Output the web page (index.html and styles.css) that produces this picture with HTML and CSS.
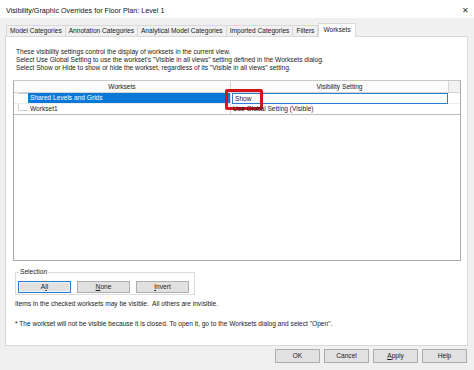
FILE: index.html
```html
<!DOCTYPE html>
<html lang="en">
<head>
    <meta charset="UTF-8">
    <title>Visibility/Graphic Overrides</title>
    <link rel="stylesheet" href="styles.css">
</head>
<body>
    <div class="dialog">
        <div class="title-bar">
            <span class="title">Visibility/Graphic Overrides for Floor Plan: Level 1</span>
            <span class="close">&#x2715;</span>
        </div>

        <div class="dialog-body">
            <div class="tabs">
                <div class="tab">Model Categories</div>
                <div class="tab">Annotation Categories</div>
                <div class="tab">Analytical Model Categories</div>
                <div class="tab">Imported Categories</div>
                <div class="tab">Filters</div>
                <div class="tab active">Worksets</div>
            </div>

            <div class="page">
                <p class="intro">
                    These visibility settings control the display of worksets in the current view.<br>
                    Select Use Global Setting to use the workset's "Visible in all views" setting defined in the Worksets dialog.<br>
                    Select Show or Hide to show or hide the workset, regardless of its "Visible in all views" setting.
                </p>

                <div class="grid">
                    <div class="grid-head">
                        <div class="col-name">Worksets</div>
                        <div class="col-setting">Visibility Setting</div>
                        <div class="col-corner"></div>
                    </div>
                    <div class="grid-row">
                        <div class="indent"><span class="branch first"></span></div>
                        <div class="cell-name selected">Shared Levels and Grids</div>
                        <div class="cell-setting">
                            <div class="edit-box">Show</div>
                            <div class="callout"></div>
                        </div>
                    </div>
                    <div class="grid-row last">
                        <div class="indent"><span class="branch"></span></div>
                        <div class="cell-name">Workset1</div>
                        <div class="cell-setting">
                            <div class="plain-value">Use Global Setting (Visible)</div>
                        </div>
                    </div>
                </div>

                <fieldset class="selection">
                    <legend>Selection</legend>
                    <button class="btn default">A<u>l</u>l</button>
                    <button class="btn"><u>N</u>one</button>
                    <button class="btn"><u>I</u>nvert</button>
                </fieldset>

                <p class="note">Items in the checked worksets may be visible.&nbsp; All others are invisible.</p>
                <p class="note closed">* The workset will not be visible because it is closed. To open it, go to the Worksets dialog and select "Open".</p>
            </div>

            <div class="footer">
                <button class="btn footer-btn">OK</button>
                <button class="btn footer-btn">Cancel</button>
                <button class="btn footer-btn"><u>A</u>pply</button>
                <button class="btn footer-btn">Help</button>
            </div>
        </div>
    </div>
</body>
</html>
```

FILE: styles.css
```css
* {
    box-sizing: border-box;
}

body {
    margin: 0;
    width: 474px;
    height: 370px;
    overflow: hidden;
    font-family: "Liberation Sans", Arial, sans-serif;
    font-size: 6.6px;
    color: #1a1a1a;
    background: #f0f0f0;
}

.dialog {
    width: 474px;
    height: 370px;
    display: flex;
    flex-direction: column;
}

/* window title */
.title-bar {
    height: 18px;
    background: #ffffff;
    display: flex;
    align-items: center;
    justify-content: space-between;
    padding: 2px 5px 0 6px;
}

.title {
    font-size: 7.2px;
    color: #111;
}

.close {
    font-size: 8px;
    color: #333;
}

.dialog-body {
    flex: 1;
    background: #f0f0f0;
    padding: 5px 6px 0 5px;
    display: flex;
    flex-direction: column;
}

/* tab strip */
.tabs {
    display: flex;
    align-items: flex-end;
    height: 13px;
    padding-left: 1px;
}

.tab {
    height: 11px;
    padding: 0 3px;
    line-height: 10px;
    border: 1px solid #d9d9d9;
    border-bottom: none;
    border-left: none;
    background: #f0f0f0;
    white-space: nowrap;
}

.tab:first-child {
    border-left: 1px solid #d9d9d9;
}

.tab.active {
    height: 14px;
    line-height: 11px;
    margin-bottom: -1px;
    padding: 0 4px;
    background: #ffffff;
    border-left: 1px solid #d9d9d9;
    position: relative;
    z-index: 1;
}

/* tab page */
.page {
    height: 310px;
    background: #ffffff;
    border: 1px solid #d9d9d9;
}

.intro {
    margin: 0;
    padding: 11px 10px 0 10px;
    line-height: 8px;
    white-space: nowrap;
}

.grid {
    margin: 8px 6px 0 7px;
    height: 181px;
    border: 1px solid #a9a9a9;
    border-top-color: #c8c8c8;
}

.grid-head {
    display: flex;
    height: 12px;
    line-height: 11px;
    background: #fbfbfb;
    border-bottom: 1px solid #d5d5d5;
}

.col-name {
    width: 217px;
    text-align: center;
    border-right: 1px solid #d5d5d5;
}

.col-setting {
    width: 218px;
    text-align: center;
    border-right: 1px solid #d5d5d5;
}

.col-corner {
    flex: 1;
    background: #f2f2f2;
}

.grid-row {
    display: flex;
    height: 11px;
    line-height: 10px;
    border-bottom: 1px solid #ececec;
}

.grid-row.last {
    border-bottom-color: #bdbdbd;
}

.indent {
    width: 14px;
    padding: 0 0 0 4px;
}

.branch {
    display: block;
    width: 10px;
    height: 7px;
    border-left: 1px solid #cfcfcf;
    border-bottom: 1px solid #cfcfcf;
}

.branch.first {
    height: 1px;
    border-left: none;
    border-bottom: none;
    border-top: 1px solid #cfcfcf;
}

.cell-name {
    width: 203px;
    padding-left: 2px;
    border-right: 1px solid #d5d5d5;
}

.cell-name.selected {
    background: #0a78d4;
    color: #ffffff;
}

.cell-setting {
    width: 217px;
    position: relative;
}

.edit-box {
    height: 11px;
    margin-left: 1px;
    padding-left: 2px;
    border: 1px solid #2a7fd0;
    line-height: 9px;
    background: #ffffff;
}

.plain-value {
    padding-left: 2px;
}

/* red highlight drawn over the "Show" value */
.callout {
    position: absolute;
    left: -6px;
    top: -4px;
    width: 38px;
    height: 21px;
    border: 3px solid #d3141c;
    border-radius: 2px;
}

/* selection group */
.selection {
    margin: 7px 0 0 9px;
    padding: 5px 2px 1px 2px;
    width: 180px;
    border: 1px solid #dcdcdc;
    display: flex;
    gap: 6px;
}

.selection legend {
    padding: 0 1px;
    margin-left: 1px;
    line-height: 8px;
}

.btn {
    font-family: inherit;
    font-size: 6.6px;
    color: #1a1a1a;
    height: 12px;
    width: 53px;
    padding: 0;
    background: #e1e1e1;
    border: 1px solid #adadad;
    line-height: 10px;
}

.btn.default {
    border-color: #2a7fd0;
    box-shadow: inset 0 0 0 1px #e5f1fb;
}

.note {
    margin: 5px 0 0 9px;
    line-height: 8px;
}

.note.closed {
    margin-top: 12px;
}

/* dialog buttons */
.footer {
    display: flex;
    justify-content: flex-end;
    gap: 4px;
    margin-top: 3px;
    padding-right: 1px;
}

.footer-btn {
    width: 45px;
    height: 14px;
}
```
